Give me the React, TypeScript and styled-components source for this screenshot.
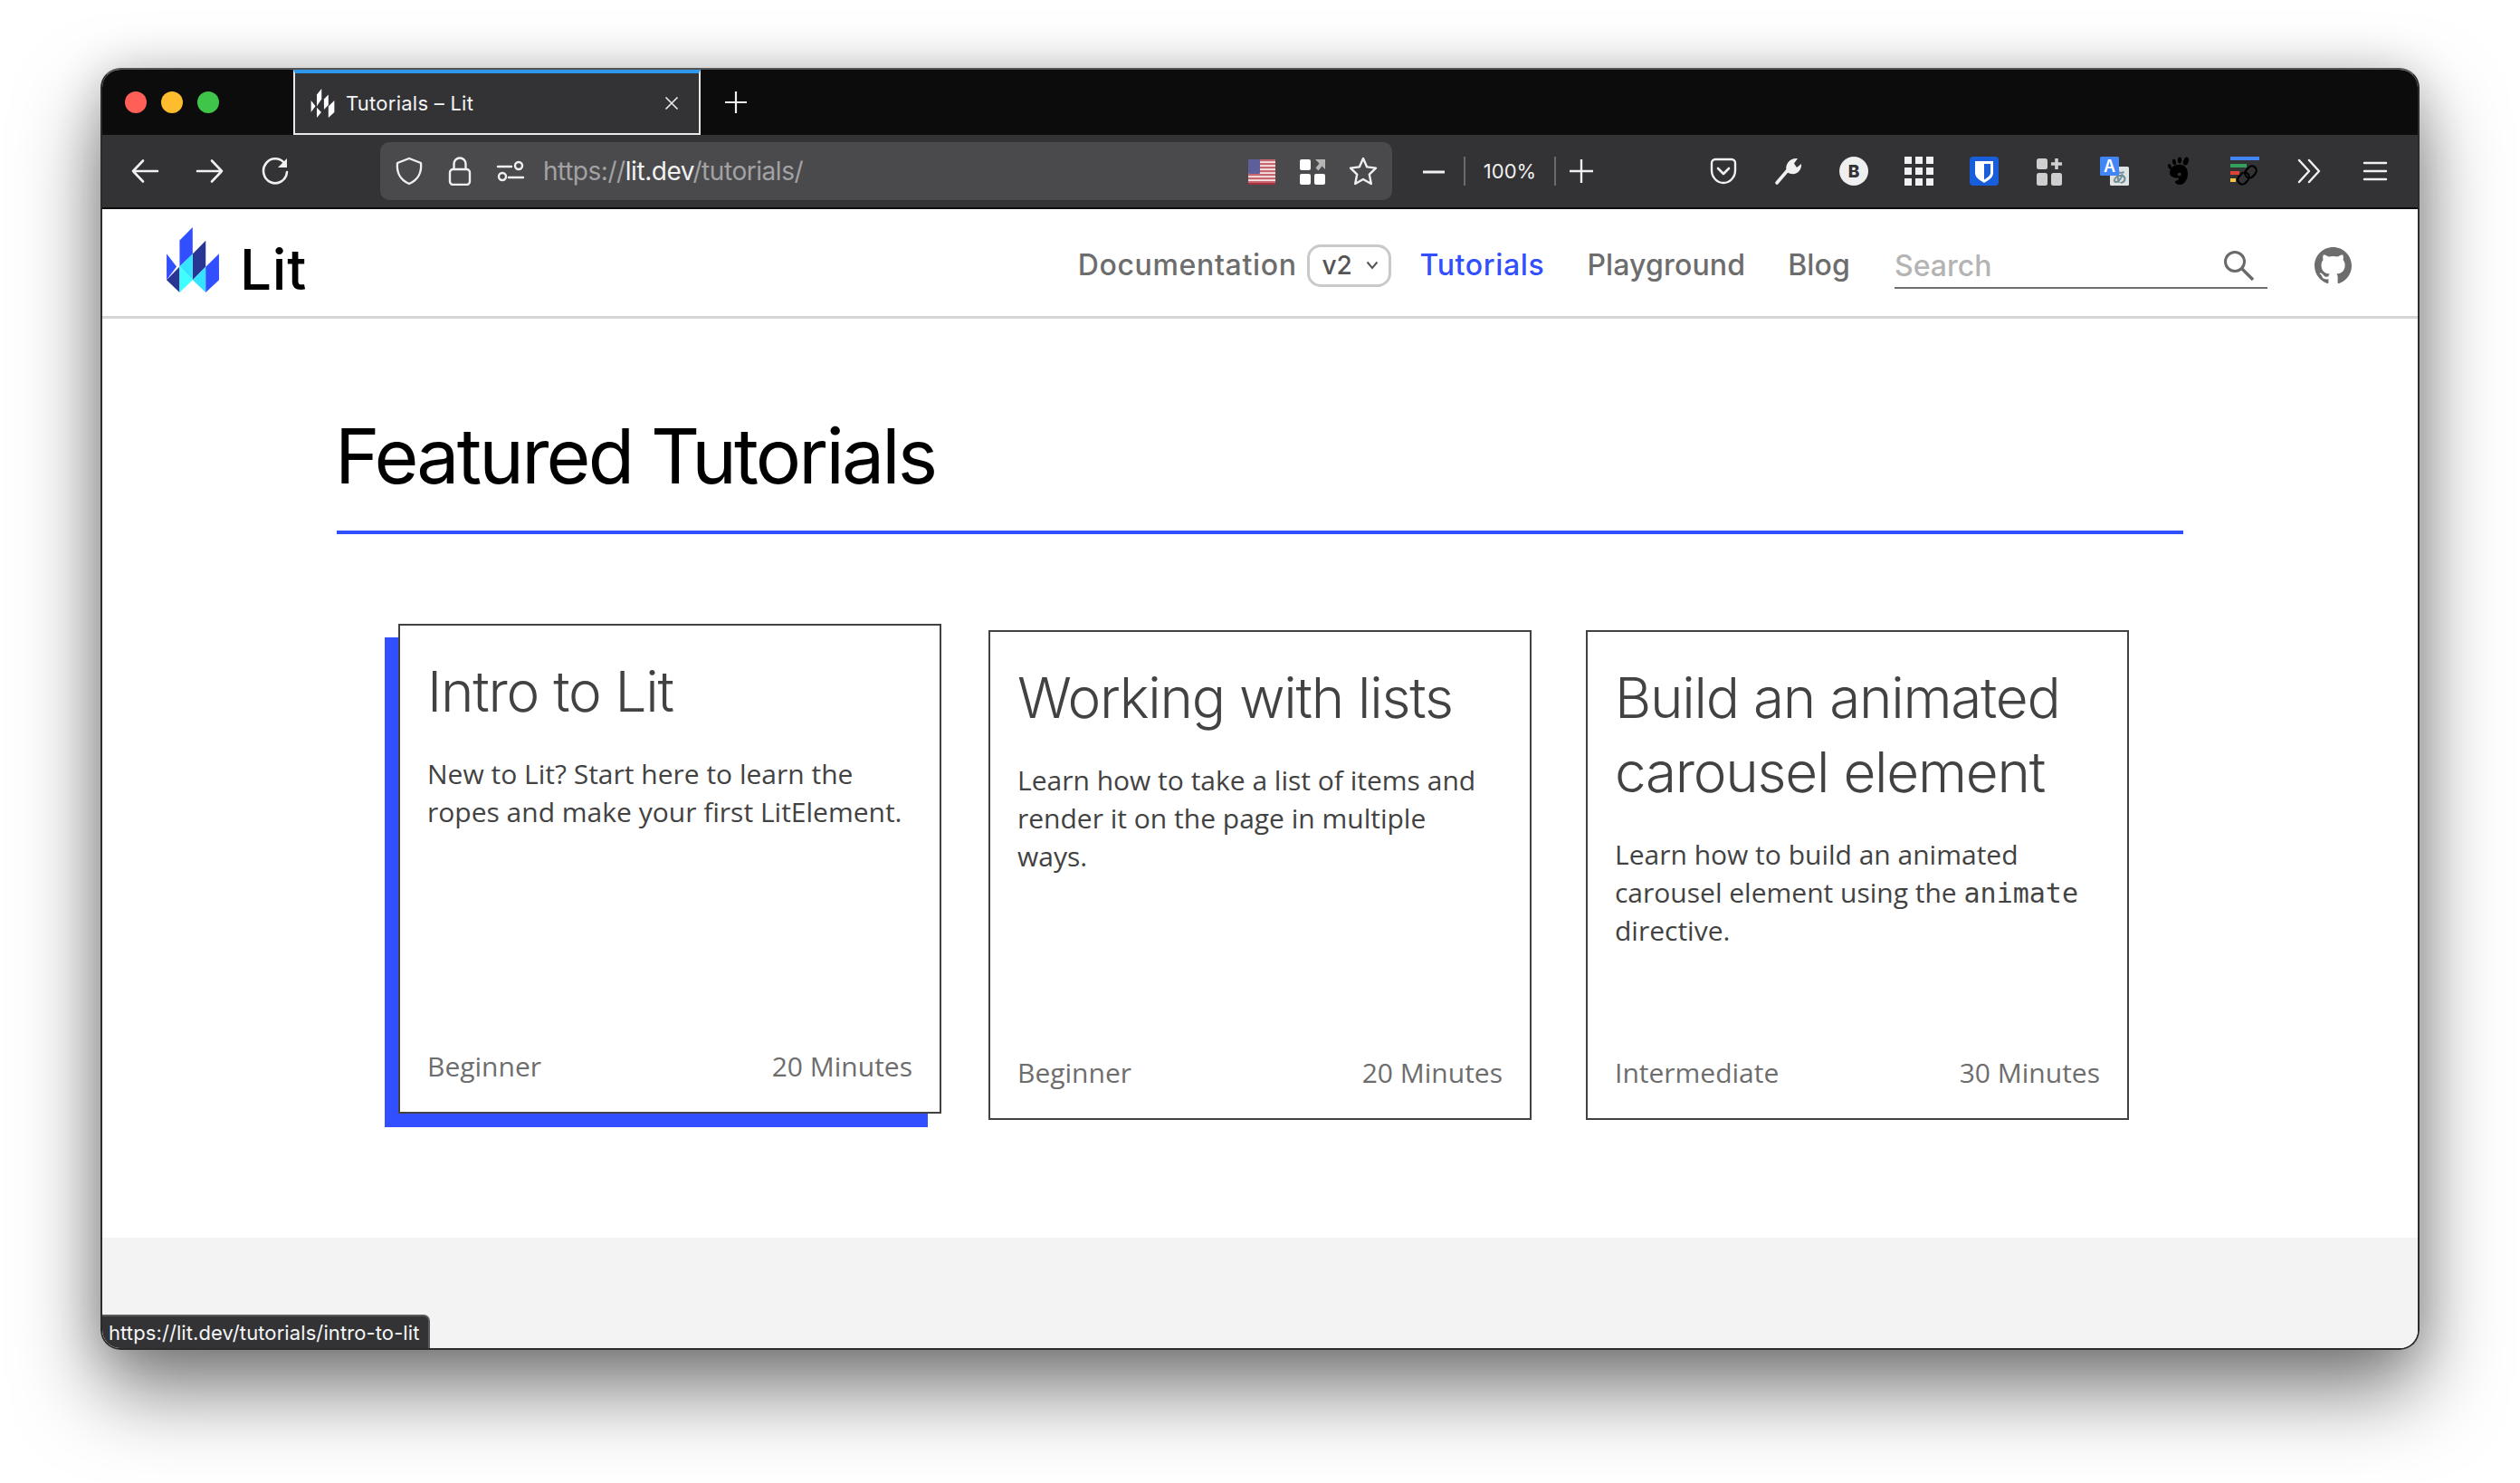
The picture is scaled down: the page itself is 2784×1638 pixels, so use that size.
import React from "react";
import styled, { createGlobalStyle } from "styled-components";

const Global = createGlobalStyle`
  html, body { margin: 0; padding: 0; background: #fff; }
  #root { width: 2784px; height: 1638px; overflow: hidden; }
  * { box-sizing: border-box; }
`;

const Page = styled.div`
  width: 2784px;
  height: 1638px;
  padding: 75px 111px 147px;
  background: #fff;
`;
const Win = styled.div`
  position: relative;
  width: 2562px;
  height: 1416px;
  border-radius: 22px;
  overflow: hidden;
  display: flex;
  flex-direction: column;
  background: #fff;
  border: 2px solid #2b2b2b;
  border-top-color: #555;
  font-family: Inter, "Liberation Sans", sans-serif;
`;
const Shadow = styled.div`
  border-radius: 22px;
  box-shadow: 0 44px 90px rgba(0, 0, 0, 0.52), 0 0 50px rgba(0, 0, 0, 0.16);
`;
const TabStrip = styled.div`
  flex: none;
  height: 72px;
  background: #0c0c0c;
  display: flex;
  align-items: stretch;
`;
const Lights = styled.div`
  width: 211px;
  display: flex;
  gap: 16px;
  padding-left: 25px;
  align-items: center;
`;
const Light = styled.span<{ $c: string }>`
  width: 24px;
  height: 24px;
  border-radius: 50%;
  background: ${(p) => p.$c};
`;
const Tab = styled.div`
  width: 450px;
  display: flex;
  align-items: center;
  background: #333336;
  border: 2px solid #e8e8e8;
  border-top: 4px solid #2e98ee;
  padding: 0 22px 0 17px;
  color: #f4f4f4;
  font-size: 22px;
`;
const TabTitle = styled.span`
  margin-left: 12px;
  flex: 1;
  letter-spacing: 0.25px;
`;
const NewTab = styled.div`
  width: 24px;
  margin-left: 27px;
  display: flex;
  align-items: center;
`;
const Toolbar = styled.div`
  flex: none;
  height: 80px;
  background: #333336;
  display: flex;
  align-items: center;
  padding: 0 31px;
`;
const Divider = styled.div`
  flex: none;
  height: 2px;
  background: #0c0c0c;
`;
const IconGroup = styled.div<{ $gap: number }>`
  display: flex;
  align-items: center;
  gap: ${(p) => p.$gap}px;
`;
const UrlBar = styled.div`
  width: 1118px;
  height: 64px;
  margin-left: 100px;
  background: #4a4a4d;
  border-radius: 10px;
  display: flex;
  align-items: center;
  padding: 0 16px;
`;
const UrlText = styled.div`
  flex: 1;
  margin-left: 20px;
  color: #a2a2a4;
  font-size: 28px;
  letter-spacing: -0.45px;
  white-space: nowrap;
`;
const UrlHost = styled.span`
  color: #f2f2f2;
`;
const ZoomBox = styled.div`
  display: flex;
  align-items: center;
  margin-left: 34px;
  color: #f0f0f0;
`;
const ZoomText = styled.div`
  width: 102px;
  height: 32px;
  margin: 0 15px 0 21px;
  border-left: 2px solid #6a6a6c;
  border-right: 2px solid #6a6a6c;
  text-align: center;
  font-size: 22px;
  line-height: 32px;
`;
const RightIcons = styled(IconGroup)`
  margin-left: auto;
`;
const NavBar = styled.header`
  flex: none;
  height: 121px;
  display: flex;
  align-items: center;
  padding: 0 73px 0 71px;
  border-bottom: 3px solid #d6d6d6;
  background: #fff;
`;
const Brand = styled.div`
  display: flex;
  align-items: flex-end;
  gap: 23px;
  margin-right: auto;
  margin-bottom: 6px;
`;
const BrandText = styled.span`
  font-size: 62px;
  line-height: 48px;
  height: 49px;
  font-weight: 500;
  color: #000;
  letter-spacing: 0.8px;
`;
const NavLink = styled.a<{ $active?: boolean }>`
  font-size: 32px;
  font-weight: 500;
  letter-spacing: ${(p) => (p.$active ? "0.65px" : "0.15px")};
  color: ${(p) => (p.$active ? "#324fff" : "#6d6d6d")};
  margin-left: ${(p) => (p.$active ? "32px" : "47px")};
  position: relative;
  top: 2px;
`;
const DocLink = styled(NavLink)`
  margin-left: 0;
  letter-spacing: 0.65px;
`;
const Version = styled.div`
  width: 93px;
  height: 47px;
  margin-left: 11px;
  position: relative;
  top: 3px;
  border: 3px solid #c9c9c9;
  border-radius: 15px;
  display: flex;
  align-items: center;
  justify-content: space-between;
  padding: 0 11px 0 14px;
  font-size: 28px;
  font-weight: 500;
  color: #555;
`;
const SearchBox = styled.div`
  width: 412px;
  height: 50px;
  margin-left: 49px;
  position: relative;
  top: 4px;
  border-bottom: 2px solid #6e6e6e;
  display: flex;
  align-items: center;
  justify-content: space-between;
  padding: 0 15px 0 0;
  color: #b4b4b4;
  font-size: 32px;
  font-weight: 500;
`;
const Github = styled.div`
  margin-left: 52px;
  position: relative;
  top: 3px;
  display: flex;
`;
const Main = styled.main`
  flex: 1;
  padding: 0 259px;
  background: #fff;
`;
const Heading = styled.h1`
  margin: 0;
  height: 238px;
  padding-top: 96px;
  border-bottom: 4px solid #324fff;
  font-size: 84px;
  line-height: 112px;
  font-weight: 400;
  color: #000;
  letter-spacing: -2.85px;
  text-indent: -2px;
`;
const Cards = styled.div`
  display: grid;
  grid-template-columns: repeat(3, 600px);
  gap: 60px;
  justify-content: center;
  margin-top: 106px;
`;
const Card = styled.article<{ $featured?: boolean }>`
  height: 541px;
  padding: 32px 30px 29px;
  border: 2px solid #424242;
  background: #fff;
  display: flex;
  flex-direction: column;
  ${(p) =>
    p.$featured
      ? "transform: translate(8px, -7px); box-shadow: -15px 15px 0 #324fff;"
      : ""}
`;
const CardTitle = styled.h2`
  margin: 0 0 29px;
  font-size: 62px;
  line-height: 82px;
  font-weight: 350;
  letter-spacing: -1.25px;
  color: #424242;
`;
const CardBody = styled.p`
  margin: 0;
  flex: 1;
  font-family: "Open Sans", sans-serif;
  font-size: 30px;
  line-height: 42px;
  color: #424242;
`;
const Mono = styled.code`
  font-family: "DejaVu Sans Mono", "Liberation Mono", monospace;
  font-size: 30px;
  line-height: 1;
  color: #444;
`;
const CardFoot = styled.div`
  display: flex;
  justify-content: space-between;
  font-family: "Open Sans", sans-serif;
  font-size: 30px;
  line-height: 42px;
  color: #6d6d6d;
`;
const Footer = styled.footer`
  flex: none;
  height: 122px;
  background: #f3f3f3;
`;
const StatusBar = styled.div`
  position: absolute;
  left: 0;
  bottom: 0;
  width: 362px;
  height: 37px;
  background: #333336;
  border-top: 2px solid #5a5a5c;
  border-right: 2px solid #5a5a5c;
  border-top-right-radius: 7px;
  padding-left: 7px;
  color: #f6f6f6;
  font-size: 22px;
  line-height: 36px;
  letter-spacing: 0.1px;
  white-space: nowrap;
`;

const Svg = styled.svg`
  display: block;
  flex: none;
`;

type P = { s?: number };
const Ic: React.FC<React.PropsWithChildren<{ w?: number; h?: number; vb?: string }>> = ({ w = 32, h = 32, vb = "0 0 32 32", children }) => (
  <Svg width={w} height={h} viewBox={vb} fill="none">{children}</Svg>
);
const W = "#f0f0f0";

const LitMark: React.FC<{ mono?: boolean; w: number; h: number }> = ({ mono, w, h }) => {
  const c = mono
    ? { a: "#fff", b: "#fff", c: "#fff", d: "#fff" }
    : { a: "#324fff", b: "#283593", c: "#33e3ff", d: "#3dffff" };
  return (
    <Svg width={w} height={h} viewBox="72 57 173 215" fill="none">
      <polygon points={mono ? "115,100 150,57 150,135 115,187" : "115,100 158,57 158,145 115,187"} fill={c.a} />
      {!mono && <polygon points="158,145 201,101 201,188 158,231" fill={c.b} />}
      {mono && <polygon points="168,135 201,101 201,178 168,211" fill="#fff" />}
      <polygon points="72,144 105,187 72,231" fill={c.a} />
      {!mono && <polygon points="72,231 115,187 115,272" fill={c.b} />}
      {!mono && <polygon points="115,187 158,145 158,231" fill={c.c} />}
      <polygon points={mono ? "115,197 148,231 115,272" : "115,187 158,231 115,272"} fill={c.d} />
      {!mono && <polygon points="158,231 201,188 201,272" fill={c.c} />}
      <polygon points="201,188 245,144 245,231 201,272" fill={c.a} />
    </Svg>
  );
};

const Back = () => (
  <Ic><path d="M30 16H3M14 4.5L3 16l11 11.5" stroke={W} strokeWidth="2.6" strokeLinecap="round" strokeLinejoin="round" /></Ic>
);
const Forward = () => (
  <Ic><path d="M2 16h27M18 4.5L29 16 18 27.5" stroke={W} strokeWidth="2.6" strokeLinecap="round" strokeLinejoin="round" /></Ic>
);
const Reload = () => (
  <Ic>
    <path d="M27 8.5A13 13.5 0 1 0 29 17" stroke={W} strokeWidth="2.6" strokeLinecap="round" />
    <path d="M29 2v10H19z" fill={W} />
  </Ic>
);
const Shield = () => (
  <Ic><path d="M16 2l13 5c1 10-3 19-13 23C6 26 2 17 3 7z" stroke={W} strokeWidth="2.4" strokeLinejoin="round" /></Ic>
);
const Lock = () => (
  <Ic>
    <rect x="5" y="14" width="22" height="17" rx="3.5" stroke={W} strokeWidth="2.4" />
    <path d="M9.5 14V8a6.5 6.5 0 0 1 13 0v6" stroke={W} strokeWidth="2.4" />
  </Ic>
);
const Tracking = () => (
  <Ic>
    <path d="M2 11h15M14 23h16" stroke={W} strokeWidth="2.4" strokeLinecap="round" />
    <circle cx="25" cy="10" r="4" stroke={W} strokeWidth="2.4" />
    <circle cx="7" cy="22" r="4" stroke={W} strokeWidth="2.4" />
  </Ic>
);
const Flag = () => (
  <Ic>
    <rect x="1" y="3" width="30" height="28" fill="#f3e3e3" />
    {[3, 7, 11, 15, 19, 23, 27].map((y) => (
      <rect key={y} x="1" y={y} width="30" height="2.2" fill="#c9656e" />
    ))}
    <rect x="1" y="29" width="30" height="2" fill="#a5303e" />
    <rect x="1" y="3" width="13" height="16" rx="1" fill="#5c5f9a" />
  </Ic>
);
const AppGrid = () => (
  <Ic>
    <rect x="2" y="3" width="12" height="12" rx="2" fill="#fff" />
    <rect x="2" y="19" width="12" height="12" rx="2" fill="#fff" />
    <rect x="18" y="19" width="12" height="12" rx="2" fill="#fff" />
    <path d="M19 3h11v11l-3.500-3.500-4 5-3-3 4-5z" fill="#b5b5b5" />
  </Ic>
);
const Star = () => (
  <Ic><path d="M16 2l4.2 9.4 9.8 1.2-7.2 7 2 10.4L16 25l-8.8 5 2-10.4-7.2-7 9.8-1.2z" stroke={W} strokeWidth="2.4" strokeLinejoin="round" /></Ic>
);
const Minus = () => (
  <Svg width="24" height="32" viewBox="0 0 24 32"><path d="M0 17h24" stroke={W} strokeWidth="3" /></Svg>
);
const Plus: React.FC<P> = ({ s = 24 }) => (
  <Svg width={s} height={s} viewBox="0 0 24 24"><path d="M12 0v24M0 12h24" stroke={W} strokeWidth="2.2" strokeLinecap="round" /></Svg>
);
const Close = () => (
  <Svg width="16" height="16" viewBox="0 0 16 16"><path d="M1.5 1.5l13 13M14.5 1.5l-13 13" stroke="#e8e8e8" strokeWidth="1.7" /></Svg>
);
const Pocket = () => (
  <Ic>
    <path d="M7 3h18a4 4 0 0 1 4 4v8c0 8-6 14-13 14S3 23 3 15V7a4 4 0 0 1 4-4z" stroke={W} strokeWidth="2.4" />
    <path d="M10 13l6 6 6-6" stroke={W} strokeWidth="2.6" strokeLinecap="round" strokeLinejoin="round" />
  </Ic>
);
const Wrench = () => (
  <Ic>
    <path d="M3 29L15 15" stroke={W} strokeWidth="3.6" strokeLinecap="round" />
    <path d="M14 17C11 9 17 1 26 2l-4 5.500 3 4.500 5-4c0.800 8-7 15-16 9z" fill={W} />
  </Ic>
);
const BIcon = () => (
  <Svg width="32" height="32" viewBox="0 0 32 32">
    <circle cx="16" cy="16" r="16" fill="#efefef" />
    <text x="16" y="22.5" textAnchor="middle" fontFamily="Inter, sans-serif" fontSize="19" fontWeight="800" fill="#333336">B</text>
  </Svg>
);
const NineGrid = () => (
  <Ic>
    {[0, 12, 24].flatMap((y) => [0, 12, 24].map((x) => <rect key={`${x}${y}`} x={x} y={y} width="8" height="8" fill="#f0f0f0" />))}
  </Ic>
);
const Bitwarden = () => (
  <Ic>
    <rect width="32" height="32" rx="4" fill="#175ddc" />
    <path d="M6 5h20v13c0 5-5 8-10 11C11 26 6 23 6 18z" fill="#fff" />
    <path d="M16 8h7v10c0 3-4 5.500-7 7.500z" fill="#175ddc" />
  </Ic>
);
const ExtPlus = () => (
  <Ic>
    <rect x="2" y="2" width="12" height="12" rx="2.500" fill="#cfcfcf" />
    <rect x="2" y="18" width="12" height="14" rx="2.500" fill="#cfcfcf" />
    <rect x="18" y="18" width="12" height="14" rx="2.500" fill="#cfcfcf" />
    <path d="M24 2v12M18 8h12" stroke="#cfcfcf" strokeWidth="3.600" />
  </Ic>
);
const Translate = () => (
  <Svg width="32" height="32" viewBox="0 0 32 32">
    <rect x="11" y="11" width="21" height="21" rx="1.500" fill="#dfe3e3" />
    <text x="21.5" y="28" textAnchor="middle" fontFamily="'Noto Sans CJK JP', sans-serif" fontSize="16" fontWeight="700" fill="#6f8b92">あ</text>
    <rect x="0" y="0" width="21" height="21" rx="1.500" fill="#4285f4" />
    <text x="10.5" y="17" textAnchor="middle" fontFamily="Inter, sans-serif" fontSize="18" fontWeight="600" fill="#fff">A</text>
  </Svg>
);
const Gnome = () => (
  <Ic>
    <path d="M17 9c6-1 10 4 10 10 0 6-4 12-8 12-3 0-6-1-6-3 0-2 3-1 4-3 0-2-2-1-5-2-5-1-6-5-4-9 1-3 5-5 9-5zm2 9c-2-1-4 1-3 3 3 1 5-1 3-3z" fill="#000" transform="translate(-2 0)" />
    <ellipse cx="5" cy="11" rx="1.800" ry="3" fill="#000" transform="rotate(-20 5 11)" />
    <ellipse cx="10" cy="6" rx="2" ry="3.200" fill="#000" transform="rotate(-10 10 6)" />
    <ellipse cx="16" cy="4" rx="2.200" ry="3.400" fill="#000" />
    <ellipse cx="23" cy="5" rx="2.800" ry="4.600" fill="#000" transform="rotate(20 23 5)" />
  </Ic>
);
const LinkChart = () => (
  <Ic>
    <rect x="0" y="0" width="32" height="4" fill="#4285f4" />
    <rect x="0" y="8" width="18" height="4" fill="#34a060" />
    <rect x="0" y="16" width="10" height="4" fill="#db4437" />
    <rect x="0" y="24" width="6" height="4" fill="#f4c542" />
    <rect x="17.500" y="10" width="10" height="14" rx="5" transform="rotate(40 22.500 17)" stroke="#000" strokeWidth="2.200" />
    <rect x="9.500" y="17" width="10" height="14" rx="5" transform="rotate(40 14.500 24)" stroke="#000" strokeWidth="2.200" />
  </Ic>
);
const Overflow = () => (
  <Ic><path d="M4 4l11 12L4 28M15 4l11 12-11 12" stroke={W} strokeWidth="2.400" strokeLinecap="round" strokeLinejoin="round" /></Ic>
);
const Hamburger = () => (
  <Ic><path d="M4 7h24M4 16h24M4 25h24" stroke={W} strokeWidth="2.400" strokeLinecap="round" /></Ic>
);
const Chevron = () => (
  <Svg width="14" height="10" viewBox="0 0 14 10"><path d="M1.500 1.500L7 8l5.500-6.500" stroke="#555" strokeWidth="2" fill="none" /></Svg>
);
const SearchIcon = () => (
  <Svg width="34" height="34" viewBox="0 0 34 34" fill="none">
    <circle cx="13" cy="13" r="10.500" stroke="#6a6a6a" strokeWidth="3" />
    <path d="M21 21l12 12" stroke="#6a6a6a" strokeWidth="3.400" />
  </Svg>
);
const GithubIcon = () => (
  <Svg width="41" height="41" viewBox="0 0 16 16">
    <path fill="#6d6d6d" d="M8 0C3.58 0 0 3.58 0 8c0 3.54 2.29 6.53 5.47 7.59.4.07.55-.17.55-.38 0-.19-.01-.82-.01-1.49-2.01.37-2.53-.49-2.69-.94-.09-.23-.48-.94-.82-1.13-.28-.15-.68-.52-.01-.53.63-.01 1.08.58 1.23.82.72 1.21 1.87.87 2.33.66.07-.52.28-.87.51-1.07-1.78-.2-3.64-.89-3.64-3.95 0-.87.31-1.59.82-2.15-.08-.2-.36-1.02.08-2.12 0 0 .67-.21 2.2.82.64-.18 1.32-.27 2-.27s1.36.09 2 .27c1.53-1.04 2.2-.82 2.2-.82.44 1.1.16 1.92.08 2.12.51.56.82 1.27.82 2.15 0 3.07-1.87 3.75-3.65 3.95.29.25.54.73.54 1.48 0 1.07-.01 1.93-.01 2.2 0 .21.15.46.55.38A8.013 8.013 0 0 0 16 8c0-4.42-3.58-8-8-8z" />
  </Svg>
);

const cards = [
  { t: "Intro to Lit", b: <>New to Lit? Start here to learn the ropes and make your first LitElement.</>, l: "Beginner", d: "20 Minutes", f: true },
  { t: "Working with lists", b: <>Learn how to take a list of items and render it on the page in multiple ways.</>, l: "Beginner", d: "20 Minutes" },
  { t: "Build an animated carousel element", b: <>Learn how to build an animated carousel element using the <Mono>animate</Mono> directive.</>, l: "Intermediate", d: "30 Minutes" },
];

export default function App() {
  return (
    <Page>
      <Global />
      <Shadow>
        <Win>
          <TabStrip>
            <Lights>
              <Light $c="#ff5f57" />
              <Light $c="#febc2e" />
              <Light $c="#3ec54a" />
            </Lights>
            <Tab>
              <LitMark mono w={27} h={32} />
              <TabTitle>Tutorials – Lit</TabTitle>
              <Close />
            </Tab>
            <NewTab><Plus /></NewTab>
          </TabStrip>
          <Toolbar>
            <IconGroup $gap={40}>
              <Back />
              <Forward />
              <Reload />
            </IconGroup>
            <UrlBar>
              <IconGroup $gap={24}>
                <Shield />
                <Lock />
                <Tracking />
              </IconGroup>
              <UrlText>https://<UrlHost>lit.dev</UrlHost>/tutorials/</UrlText>
              <IconGroup $gap={24}>
                <Flag />
                <AppGrid />
                <Star />
              </IconGroup>
            </UrlBar>
            <ZoomBox>
              <Minus />
              <ZoomText>100%</ZoomText>
              <Plus s={26} />
            </ZoomBox>
            <RightIcons $gap={40}>
              <Pocket />
              <Wrench />
              <BIcon />
              <NineGrid />
              <Bitwarden />
              <ExtPlus />
              <Translate />
              <Gnome />
              <LinkChart />
              <Overflow />
              <Hamburger />
            </RightIcons>
          </Toolbar>
          <Divider />
          <NavBar>
            <Brand>
              <LitMark w={58} h={72} />
              <BrandText>Lit</BrandText>
            </Brand>
            <DocLink>Documentation</DocLink>
            <Version>v2<Chevron /></Version>
            <NavLink $active>Tutorials</NavLink>
            <NavLink>Playground</NavLink>
            <NavLink>Blog</NavLink>
            <SearchBox>Search<SearchIcon /></SearchBox>
            <Github><GithubIcon /></Github>
          </NavBar>
          <Main>
            <Heading>Featured Tutorials</Heading>
            <Cards>
              {cards.map((c) => (
                <Card key={c.t} $featured={c.f}>
                  <CardTitle>{c.t}</CardTitle>
                  <CardBody>{c.b}</CardBody>
                  <CardFoot>
                    <span>{c.l}</span>
                    <span>{c.d}</span>
                  </CardFoot>
                </Card>
              ))}
            </Cards>
          </Main>
          <Footer />
          <StatusBar>https://lit.dev/tutorials/intro-to-lit</StatusBar>
        </Win>
      </Shadow>
    </Page>
  );
}
